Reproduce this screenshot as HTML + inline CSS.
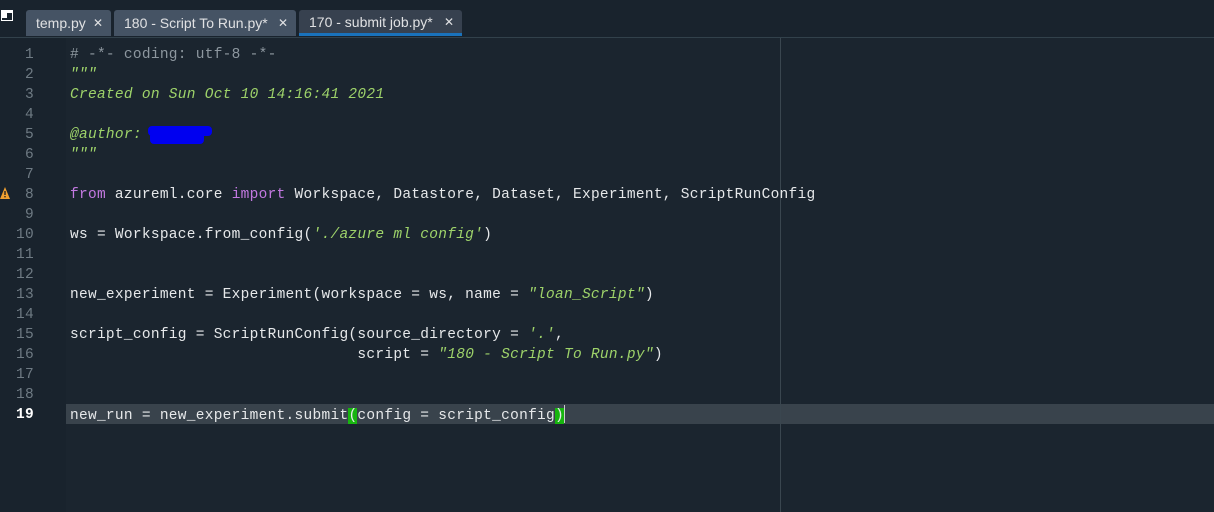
<!DOCTYPE html>
<html><head><meta charset="utf-8"><style>
body{margin:0;width:1214px;height:512px;background:#19232d;overflow:hidden;position:relative;font-family:"Liberation Sans",sans-serif}
.tabbar{position:absolute;left:0;top:0;width:1214px;height:37px;background:#19232d;border-bottom:1px solid #32414b}
.tab{position:absolute;top:10px;height:26px;background:#455364;color:#e0e1e3;font-size:14px;line-height:26px;padding-left:10px;border-radius:3px 3px 0 0;box-sizing:border-box}
.tab .x{position:absolute;right:8px;font-size:12px}
.tab.act{background:#37414f;border-bottom:3px solid #1a72bb;line-height:24px}
.gutter{position:absolute;left:0;top:38px;width:66px;height:474px;background:#19232d}
.ed{position:absolute;left:66px;top:38px;width:1148px;height:474px;background:#1b252f}
.ln{position:absolute;left:0;width:34px;text-align:right;color:#6f7b84;font:14.5px/20px "Liberation Mono",monospace;letter-spacing:0.28px}
.code{position:absolute;left:70px;font:14.5px/20px "Liberation Mono",monospace;letter-spacing:0.28px;color:#e6e8ea;white-space:pre}
.c{color:#8d979f}.s{color:#9ed36a;font-style:italic}.k{color:#c278e0}
.hl{position:absolute;left:66px;top:404px;width:1148px;height:20px;background:#39434c}
.vl{position:absolute;left:780px;top:38px;width:1px;height:474px;background:#3a464f}
.br{background:#17b50f}
</style></head><body>
<div class="tabbar">
<svg style="position:absolute;left:1px;top:10px" width="12" height="11"><rect x="0.5" y="0.5" width="11" height="10" fill="none" stroke="#fff"/><rect x="0" y="0" width="12" height="3" fill="#fff"/><rect x="0" y="3" width="6" height="5" fill="#fff"/></svg>
<div class="tab" style="left:26px;width:85px">temp.py<span class="x">✕</span></div>
<div class="tab" style="left:114px;width:182px">180 - Script To Run.py*<span class="x">✕</span></div>
<div class="tab act" style="left:299px;width:163px">170 - submit job.py*<span class="x">✕</span></div>
</div>
<div class="gutter"></div>
<div class="ed"></div>
<div class="hl"></div>
<div class="vl"></div>
<svg style="position:absolute;left:0;top:186px" width="10" height="14"><polygon points="5,1 10,13 0,13" fill="#f0a030"/><rect x="4.3" y="5" width="1.4" height="4" fill="#222"/><rect x="4.3" y="10" width="1.4" height="1.4" fill="#222"/></svg>
<div id="lns"></div>
<div class="code" style="top:45px"><span class="c"># -*- coding: utf-8 -*-</span>
<span class="s">"""</span>
<span class="s">Created on Sun Oct 10 14:16:41 2021</span>

<span class="s">@author: </span>
<span class="s">"""</span>

<span class="k">from</span> azureml.core <span class="k">import</span> Workspace, Datastore, Dataset, Experiment, ScriptRunConfig

ws = Workspace.from_config(<span class="s">'./azure ml config'</span>)


new_experiment = Experiment(workspace = ws, name = <span class="s">"loan_Script"</span>)

script_config = ScriptRunConfig(source_directory = <span class="s">'.'</span>,
                                script = <span class="s">"180 - Script To Run.py"</span>)


new_run = new_experiment.submit<span class="br">(</span>config = script_config<span class="br">)</span><span style="display:inline-block;width:1px;height:18px;background:#ccc;vertical-align:-4px"></span></div>
<div style="position:absolute;left:148px;top:126px;width:64px;height:10px;background:#0000f0;border-radius:4px"></div>
<div style="position:absolute;left:150px;top:132px;width:54px;height:12px;background:#0000f0;border-radius:4px"></div>
<script>
var h='';for(var i=1;i<=19;i++){h+='<div class="ln" style="top:'+(45+20*(i-1))+'px;'+(i==19?'color:#fff;font-weight:bold':'')+'">'+i+'</div>';}
document.getElementById('lns').innerHTML=h;
</script>
</body></html>
